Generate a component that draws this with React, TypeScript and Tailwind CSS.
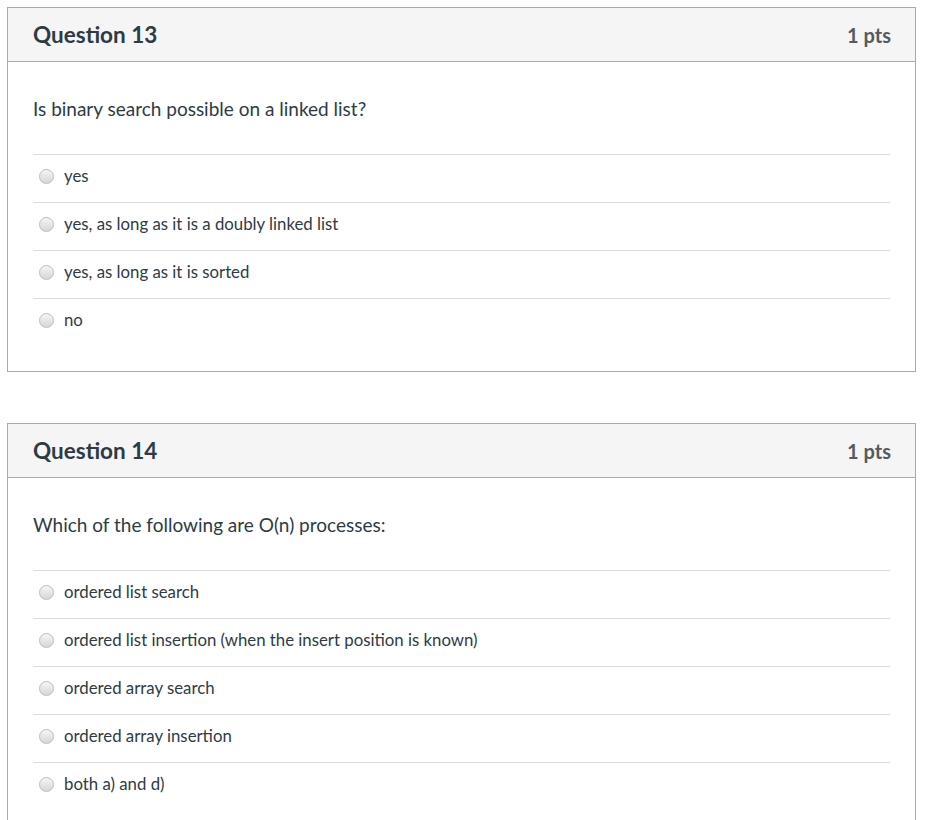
const questions = [
  {
    title: 'Question 13',
    points: '1 pts',
    text: 'Is binary search possible on a linked list?',
    answers: ['yes', 'yes, as long as it is a doubly linked list', 'yes, as long as it is sorted', 'no'],
  },
  {
    title: 'Question 14',
    points: '1 pts',
    text: 'Which of the following are O(n) processes:',
    answers: [
      'ordered list search',
      'ordered list insertion (when the insert position is known)',
      'ordered array search',
      'ordered array insertion',
      'both a) and d)',
    ],
  },
];

function Radio() {
  return (
    <span className="w-[15px] h-[15px] rounded-full border border-[#bdbdbd] bg-gradient-to-b from-[#f6f6f6] to-[#d6d6d6] shrink-0" />
  );
}

export default function App() {
  return (
    <div className="min-h-screen bg-white pt-[7px] pl-[7px] font-['Lato','Liberation_Sans',sans-serif] text-[#2d3b45]">
      {questions.map((q, qi) => (
        <div key={qi} className="w-[909px] border border-[#aaaaaa] mb-[51px]">
          <div className="h-[54px] bg-[#f5f5f5] border-b border-[#aaaaaa] flex items-center justify-between pl-[25px] pr-[24px]">
            <h2 className="text-[22.5px] font-bold text-[#2d3b45]">{q.title}</h2>
            <span className="text-[20px] font-bold text-[#555a5e]">{q.points}</span>
          </div>
          <div className="px-[25px] pt-[33px] pb-[25px]">
            <p className="text-[19px] leading-[27px] text-[#2d3b45]">{q.text}</p>
            <div className="mt-[32px]">
              {q.answers.map((a, ai) => (
                <div key={ai} className="h-[48px] border-t border-[#dddddd] flex items-center pb-[5px] pl-[6px] gap-[10px]">
                  <Radio />
                  <span className="text-[16.8px] text-[#2d3b45]">{a}</span>
                </div>
              ))}
            </div>
          </div>
        </div>
      ))}
    </div>
  );
}
